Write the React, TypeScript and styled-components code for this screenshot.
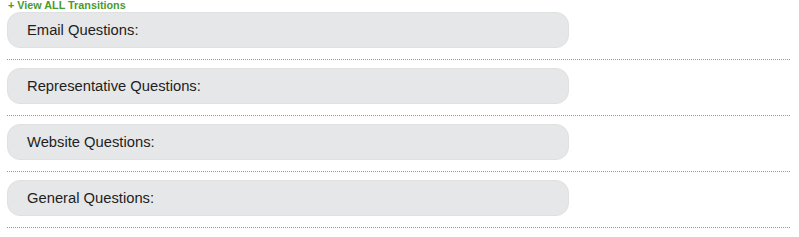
import React from "react";
import styled, { createGlobalStyle } from "styled-components";

const Global = createGlobalStyle`
  html, body { margin: 0; padding: 0; background: #fff; }
  body { font-family: Arial, "Liberation Sans", sans-serif; }
`;

const Page = styled.div`
  width: 783px;
  padding-left: 7px;
`;

const ViewAll = styled.a`
  display: block;
  height: 12px;
  line-height: 11px;
  font-size: 10.8px;
  font-weight: bold;
  color: #4b9a2e;
  text-decoration: none;
  padding-left: 1px;
`;

const Section = styled.div`
  padding-bottom: 11px;
  border-bottom: 1px dotted #9a9a9a;
  margin-bottom: 8px;
`;

const Pill = styled.div`
  width: 562px;
  height: 36px;
  box-sizing: border-box;
  background: #e6e7e8;
  border: 1px solid #dfe0e1;
  border-radius: 13px;
  display: flex;
  align-items: center;
  padding-left: 19px;
  font-size: 14.75px;
  color: #1e1e1e;
`;

const items = [
  "Email Questions:",
  "Representative Questions:",
  "Website Questions:",
  "General Questions:",
];

export default function App() {
  return (
    <>
      <Global />
      <Page>
        <ViewAll href="#">+ View ALL Transitions</ViewAll>
        {items.map((t) => (
          <Section key={t}>
            <Pill>{t}</Pill>
          </Section>
        ))}
      </Page>
    </>
  );
}
